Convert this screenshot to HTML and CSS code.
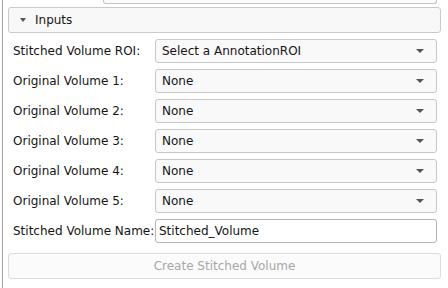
FILE: index.html
```html
<!DOCTYPE html>
<html>
<head>
<meta charset="utf-8">
<link rel="stylesheet" href="styles.css">
</head>
<body>
<div class="frame">
  <div class="topbox"></div>
  <div class="section">
    <span class="caret"></span>
    <span class="section-title">Inputs</span>
  </div>
  <div class="form">
    <div class="label">Stitched Volume ROI:</div>
    <div class="combo"><span>Select a AnnotationROI</span><span class="arrow"></span></div>
    <div class="label">Original Volume 1:</div>
    <div class="combo"><span>None</span><span class="arrow"></span></div>
    <div class="label">Original Volume 2:</div>
    <div class="combo"><span>None</span><span class="arrow"></span></div>
    <div class="label">Original Volume 3:</div>
    <div class="combo"><span>None</span><span class="arrow"></span></div>
    <div class="label">Original Volume 4:</div>
    <div class="combo"><span>None</span><span class="arrow"></span></div>
    <div class="label">Original Volume 5:</div>
    <div class="combo"><span>None</span><span class="arrow"></span></div>
    <div class="label">Stitched Volume Name:</div>
    <div class="field">Stitched_Volume</div>
  </div>
  <div class="button">Create Stitched Volume</div>
</div>
</body>
</html>
```
FILE: styles.css
```css
html, body {
  margin: 0;
  padding: 0;
  background: #ffffff;
}
body {
  width: 448px;
  height: 288px;
  overflow: hidden;
  font-family: "DejaVu Sans", Verdana, sans-serif;
  font-size: 12px;
  color: #141414;
}
.frame {
  margin-left: 2px;
  border-left: 1px solid #a0a0a0;
  height: 288px;
  box-sizing: border-box;
}
.topbox {
  margin-left: 100px;
  width: 334px;
  height: 4px;
  box-sizing: border-box;
  border: 1px solid #c4c4c4;
  border-top: none;
  border-radius: 0 0 3px 3px;
  background: #fafafa;
}
.section {
  margin: 3px 0 0 5px;
  width: 433px;
  height: 26px;
  box-sizing: border-box;
  border: 1px solid #cacaca;
  border-radius: 3px;
  background: #f8f8f8;
  display: flex;
  align-items: center;
  padding-left: 11px;
}
.caret {
  width: 0;
  height: 0;
  border-left: 3.5px solid transparent;
  border-right: 3.5px solid transparent;
  border-top: 4px solid #555;
  margin-right: 9px;
}
.form {
  margin-top: 6px;
  padding-left: 10px;
  display: grid;
  grid-template-columns: 142px 282px;
  grid-auto-rows: 24px;
  row-gap: 6px;
}
.label {
  display: flex;
  align-items: center;
  white-space: nowrap;
}
.combo, .field {
  box-sizing: border-box;
  border: 1px solid #c8c8c8;
  border-radius: 3px;
  background: #f9f9f9;
  display: flex;
  align-items: center;
  justify-content: space-between;
  padding: 0 12px 0 6px;
}
.field {
  background: #ffffff;
  border-color: #b4b4b4;
  padding-left: 3px;
}
.arrow {
  width: 0;
  height: 0;
  border-left: 4px solid transparent;
  border-right: 4px solid transparent;
  border-top: 4px solid #555;
}
.button {
  margin: 10px 0 0 5px;
  width: 433px;
  height: 26px;
  box-sizing: border-box;
  border: 1px solid #dcdcdc;
  border-radius: 3px;
  background: #fbfbfb;
  color: #a8a8a8;
  display: flex;
  align-items: center;
  justify-content: center;
}
```
